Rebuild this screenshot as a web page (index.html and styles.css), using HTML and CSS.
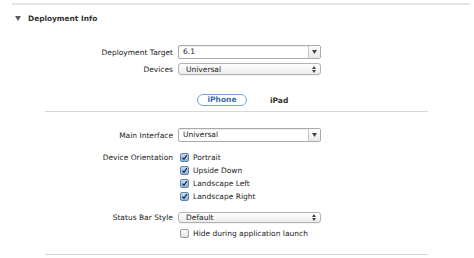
FILE: index.html
```html
<!DOCTYPE html>
<html lang="en">
<head>
  <meta charset="UTF-8">
  <title>Deployment Info</title>
  <link rel="stylesheet" href="styles.css">
</head>
<body>
  <div class="topline"></div>
  <div class="sec-head">
    <svg class="disclosure" width="6" height="5" viewBox="0 0 6 5"><path d="M0 0h6L3 5z" fill="#5e5e5e"/></svg>
    <span>Deployment Info</span>
  </div>

  <div class="form">
    <div class="row r-target">
      <div class="lbl">Deployment Target</div>
      <div class="combo">
        <div class="combo-text">6.1</div>
        <div class="combo-btn"><svg width="5" height="4" viewBox="0 0 5 4"><path d="M0 0h5L2.5 4z" fill="#444"/></svg></div>
      </div>
    </div>
    <div class="row r-devices">
      <div class="lbl">Devices</div>
      <div class="popup">
        <div class="popup-text">Universal</div>
        <svg class="updown" width="4" height="7" viewBox="0 0 4 7"><path d="M0 3L2 0 4 3zM0 4h4L2 7z" fill="#444"/></svg>
      </div>
    </div>

    <div class="seg">
      <div class="seg-item on">iPhone</div>
      <div class="seg-item">iPad</div>
    </div>
    <div class="divider"></div>

    <div class="row r-main">
      <div class="lbl">Main Interface</div>
      <div class="combo">
        <div class="combo-text">Universal</div>
        <div class="combo-btn"><svg width="5" height="4" viewBox="0 0 5 4"><path d="M0 0h5L2.5 4z" fill="#444"/></svg></div>
      </div>
    </div>

    <div class="orient">
      <div class="lbl">Device Orientation</div>
      <div class="checks">
        <div class="check"><span class="box checked"><svg width="9" height="9" viewBox="0 0 9 9"><path d="M1.8 4.6l2 2.2L7.6 1.4" fill="none" stroke="#1c2d48" stroke-width="1.6"/></svg></span>Portrait</div>
        <div class="check"><span class="box checked"><svg width="9" height="9" viewBox="0 0 9 9"><path d="M1.8 4.6l2 2.2L7.6 1.4" fill="none" stroke="#1c2d48" stroke-width="1.6"/></svg></span>Upside Down</div>
        <div class="check"><span class="box checked"><svg width="9" height="9" viewBox="0 0 9 9"><path d="M1.8 4.6l2 2.2L7.6 1.4" fill="none" stroke="#1c2d48" stroke-width="1.6"/></svg></span>Landscape Left</div>
        <div class="check"><span class="box checked"><svg width="9" height="9" viewBox="0 0 9 9"><path d="M1.8 4.6l2 2.2L7.6 1.4" fill="none" stroke="#1c2d48" stroke-width="1.6"/></svg></span>Landscape Right</div>
      </div>
    </div>

    <div class="row r-status">
      <div class="lbl">Status Bar Style</div>
      <div class="popup">
        <div class="popup-text">Default</div>
        <svg class="updown" width="4" height="7" viewBox="0 0 4 7"><path d="M0 3L2 0 4 3zM0 4h4L2 7z" fill="#444"/></svg>
      </div>
    </div>
    <div class="row r-hide">
      <div class="lbl"></div>
      <div class="check"><span class="box"></span>Hide during application launch</div>
    </div>

    <div class="divider bottom"></div>
  </div>
</body>
</html>
```

FILE: styles.css
```css
* { box-sizing: border-box; }
html, body {
  margin: 0;
  background: #fff;
  font-family: 'DejaVu Sans', Verdana, sans-serif;
  font-size: 7.5px;
  color: #222;
}
.topline {
  margin: 3px 4px 0 12px;
  height: 2px;
  background: #e4e4e4;
}
.sec-head {
  display: flex;
  align-items: center;
  gap: 7px;
  height: 14px;
  margin-top: 6px;
  padding-left: 15px;
  font-weight: bold;
  font-size: 7.4px;
  color: #333;
}

/* form */
.form { margin-left: 45px; width: 383px; }
.row {
  display: grid;
  grid-template-columns: 128px 143px;
  column-gap: 5px;
  align-items: center;
}
.lbl { text-align: right; white-space: nowrap; }
.r-target { margin-top: 20px; height: 14px; }
.r-devices { margin-top: 4px; height: 12px; }
.r-main { margin-top: 16px; height: 14px; }
.r-status { margin-top: 9px; height: 11px; }
.r-hide { margin-top: 4px; height: 13px; }

.combo {
  display: flex;
  height: 14px;
  border: 1px solid #a9a9a9;
  border-radius: 2px;
  background: #fff;
  box-shadow: inset 0 1px 1px rgba(0,0,0,.07);
}
.combo-text { flex: 1; padding-left: 4px; line-height: 12px; }
.combo-btn {
  width: 12px;
  display: flex;
  align-items: center;
  justify-content: center;
  border-left: 1px solid #c6c6c6;
  background: linear-gradient(#fdfdfd, #e9e9e9);
}
.popup {
  display: flex;
  align-items: center;
  height: 100%;
  padding: 0 4px 0 7px;
  border: 1px solid #b2b2b2;
  border-radius: 3px;
  background: linear-gradient(#ffffff, #ebebeb);
  box-shadow: 0 1px 0 rgba(0,0,0,.05);
}
.popup-text { flex: 1; }

/* segmented */
.seg {
  display: flex;
  align-items: center;
  height: 12px;
  margin: 19px 0 0 152px;
  gap: 23px;
  font-weight: bold;
}
.seg-item { color: #333; }
.seg-item.on {
  width: 50px;
  height: 12px;
  line-height: 10px;
  text-align: center;
  border: 1px solid #74a4dc;
  border-radius: 6px;
  color: #3b6aa6;
}
.divider {
  margin-top: 5px;
  height: 1px;
  background: #d6d6d6;
}
.divider.bottom { margin-top: 14px; }

/* orientation */
.orient {
  display: grid;
  grid-template-columns: 128px 143px;
  column-gap: 5px;
  align-items: start;
  margin-top: 9px;
}
.orient .lbl { line-height: 13px; }
.check {
  display: flex;
  align-items: center;
  gap: 4px;
  height: 13px;
  padding-left: 2px;
  white-space: nowrap;
}
.box {
  width: 9px;
  height: 9px;
  border: 1px solid #9b9b9b;
  border-radius: 2px;
  background: linear-gradient(#ffffff, #e4e4e4);
  display: flex;
  align-items: center;
  justify-content: center;
}
.box.checked {
  border-color: #5f83ad;
  background: linear-gradient(#c7dbf2, #8fb3de);
}
.box svg { display: block; }
```
